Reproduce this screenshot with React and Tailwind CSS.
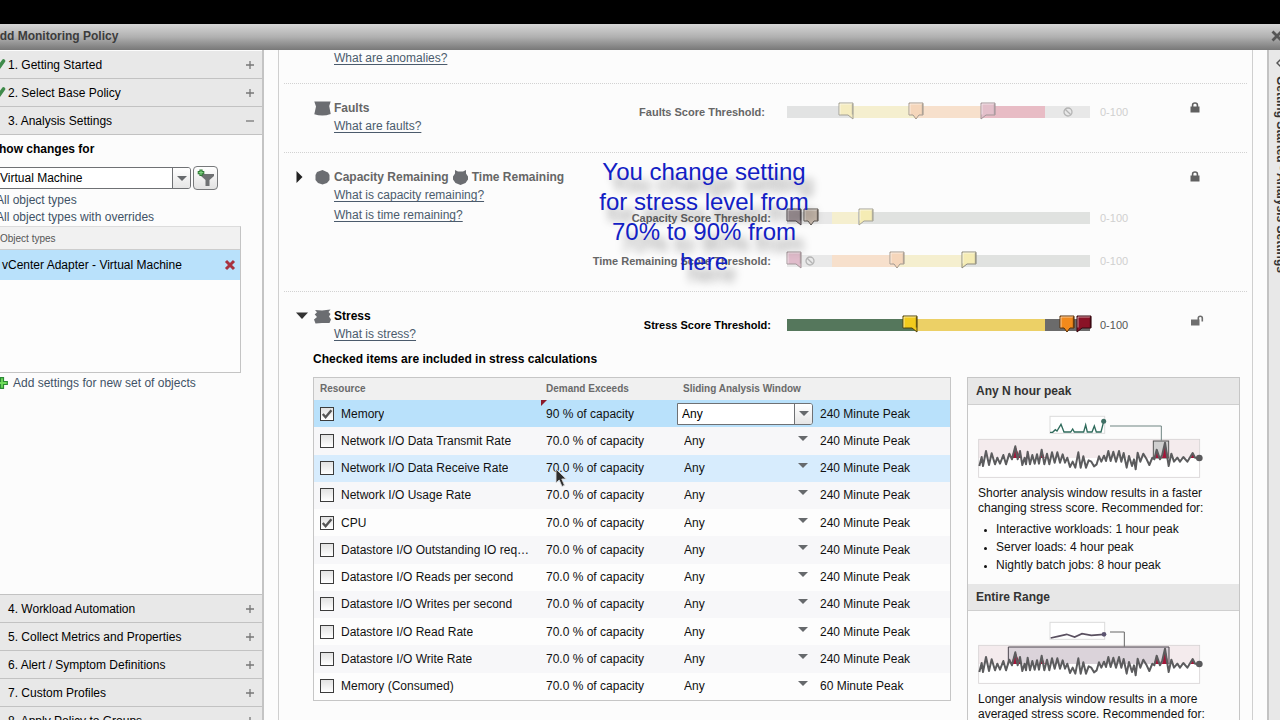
import React from "react";

const WAVE =
  "88,525 95,498 99,525 108,480 117,522 125,487 135,520 142,500 150,518 160,492 168,520 178,488 186,505 196,466 203,505 210,480 217,522 224,500 228,520 233,482 240,520 247,492 254,518 261,490 267,518 275,476 283,520 291,488 298,520 306,484 314,515 322,484 330,515 338,490 345,515 352,500 360,528 368,512 376,530 385,484 392,530 400,496 408,530 416,508 424,512 432,526 440,520 447,496 454,512 462,494 468,510 475,480 482,510 490,482 498,512 507,480 514,512 521,486 530,530 537,495 546,525 552,505 557,535 563,485 571,512 580,488 590,505 598,522 607,500 613,505 620,476 630,505 637,490 645,455 656,525 664,488 672,512 682,500 690,512 700,498 712,512 728,486 735,500 748,500";

const ROWS = [
  { name: "Memory", demand: "90 % of capacity", peak: "240 Minute Peak", checked: true, editing: true },
  { name: "Network I/O Data Transmit Rate", demand: "70.0 % of capacity", peak: "240 Minute Peak" },
  { name: "Network I/O Data Receive Rate", demand: "70.0 % of capacity", peak: "240 Minute Peak", hover: true },
  { name: "Network I/O Usage Rate", demand: "70.0 % of capacity", peak: "240 Minute Peak" },
  { name: "CPU", demand: "70.0 % of capacity", peak: "240 Minute Peak", checked: true },
  { name: "Datastore I/O Outstanding IO requests", demand: "70.0 % of capacity", peak: "240 Minute Peak" },
  { name: "Datastore I/O Reads per second", demand: "70.0 % of capacity", peak: "240 Minute Peak" },
  { name: "Datastore I/O Writes per second", demand: "70.0 % of capacity", peak: "240 Minute Peak" },
  { name: "Datastore I/O Read Rate", demand: "70.0 % of capacity", peak: "240 Minute Peak" },
  { name: "Datastore I/O Write Rate", demand: "70.0 % of capacity", peak: "240 Minute Peak" },
  { name: "Memory (Consumed)", demand: "70.0 % of capacity", peak: "60 Minute Peak" },
];

const FAULTS = {
  segments: [[0, 21.8, "#e2e3e3"], [21.8, 42.5, "#f5efcf"], [42.5, 64, "#f7e0cc"], [64, 85, "#e8bcc5"], [85, 100, "#e8e8e8"]],
  markers: [
    { at: 19.5, point: "right", fill: "#f5ecc0", edge: "#a3a196" },
    { at: 42.6, point: "center", fill: "#f5d6bb", edge: "#a3998f" },
    { at: 66.4, point: "left", fill: "#e3bfca", edge: "#a39699" },
  ],
  ban: 92.6,
};
const CAPACITY = {
  segments: [[0, 15, "#e8e8e8"], [15, 23.5, "#f5efcf"], [23.5, 100, "#e0e2e0"]],
  markers: [
    { at: 2.3, point: "right", fill: "#a3979b", edge: "#4c474a" },
    { at: 8, point: "center", fill: "#cbbdb0", edge: "#5d5650" },
    { at: 26, point: "left", fill: "#f5ecb4", edge: "#a3a196" },
  ],
};
const TIME = {
  segments: [[0, 15, "#e9e9e9"], [15, 36.3, "#f7e0cc"], [36.3, 58, "#f5efcf"], [58, 100, "#e0e2e0"]],
  markers: [
    { at: 2.3, point: "right", fill: "#e0bccb", edge: "#a39699" },
    { at: 36.3, point: "center", fill: "#f5d6bb", edge: "#a3998f" },
    { at: 60, point: "left", fill: "#f5ecb4", edge: "#8c8a7c" },
  ],
  ban: 7.6,
};
const STRESS = {
  segments: [[0, 42.8, "#55775c"], [42.8, 85, "#ecd066"], [85, 100, "#6b6b6b"]],
  markers: [
    { at: 40.5, point: "right", fill: "#f2cb1c", edge: "#4f430b" },
    { at: 92.4, point: "center", fill: "#f28a1c", edge: "#57300a" },
    { at: 98, point: "left", fill: "#8a1226", edge: "#32060e" },
  ],
};

const POINTERS = {
  right: "M1 1H15V17L10 13H1Z",
  center: "M1 1H15V13H11L8 17L5 13H1Z",
  left: "M1 1H15V13H6L1 17Z",
};

function Marker({ at, point, fill, edge, label }) {
  return (
    <button
      type="button"
      role="slider"
      aria-label={label}
      aria-valuemin={0}
      aria-valuemax={100}
      aria-valuenow={Math.round(at)}
      className="absolute -top-1 -ml-2 block h-[18px] w-4"
      style={{ left: `${at}%` }}
    >
      <svg viewBox="0 0 16 18" className="block h-[18px] w-4">
        <path d={POINTERS[point]} fill={fill} stroke={edge} strokeWidth="1" strokeLinejoin="round" />
        <path d="M2 12.5V2H14" fill="none" stroke="#fff" strokeOpacity=".55" strokeWidth="1" />
        <path d="M14.5 2V12.5" fill="none" stroke={edge} strokeOpacity=".7" strokeWidth="1.4" />
      </svg>
    </button>
  );
}

function Threshold({ label, data, active, inset }) {
  return (
    <div className="flex h-5 items-center">
      <span
        className={`w-[200px] shrink-0 whitespace-nowrap text-right text-[11px] font-bold ${active ? "text-black" : "text-[#666]"} ${inset ? "pr-1.5" : ""}`}
      >
        {label}
      </span>
      <div className="relative ml-4 h-3 flex-1">
        <div className="flex h-3">
          {data.segments.map(([from, to, color]) => (
            <div key={from} style={{ width: `${to - from}%`, backgroundColor: color }} />
          ))}
        </div>
        {data.ban && (
          <svg viewBox="0 0 10 10" className="absolute top-px -ml-[5px] size-2.5" style={{ left: `${data.ban}%` }}>
            <circle cx="5" cy="5" r="4" fill="none" stroke="#b4b4b4" strokeWidth="1.3" />
            <path d="M2.2 2.2L7.8 7.8" stroke="#b4b4b4" strokeWidth="1.3" />
          </svg>
        )}
        {data.markers.map((m) => (
          <Marker key={m.at} {...m} label={label} />
        ))}
      </div>
      <span className={`ml-2.5 w-[90px] shrink-0 text-[11px] ${active ? "text-[#555]" : "text-[#d0d0d0]"}`}>0-100</span>
    </div>
  );
}

function Lock({ open }) {
  return open ? (
    <svg viewBox="0 0 14 11" className="h-[11px] w-3.5" fill="none">
      <rect x="1" y="4.5" width="8.5" height="6" fill="#6e6e6e" />
      <path d="M8.3 5V3Q8.300 1.300 10.300 1.300T12.300 3V6.500" stroke="#6e6e6e" strokeWidth="1.6" />
    </svg>
  ) : (
    <svg viewBox="0 0 10 11" className="h-[11px] w-2.5" fill="none">
      <rect x=".5" y="4.5" width="9" height="6" fill="#606060" />
      <path d="M2.6 5V3Q2.6 1 5 1T7.4 3V5" stroke="#606060" strokeWidth="1.6" />
    </svg>
  );
}

function HelpLink({ children }) {
  return (
    <a href="#help" className="text-xs text-[#4b5b6c] underline underline-offset-2">
      {children}
    </a>
  );
}

const ICONS = {
  faults: "M.3 1.500H16.700L15.200 6L16.700 14Q8.500 17 .3 14.200L2 6.500Z",
  capacity: "M8.500 1L14 3.500L15.500 6V11L13 14L8.500 15.500L4 14L1.500 11V6L3 3Z",
  time: "M3 1L6 2.500H11L14 1V4.500L16 7.500V10.500L13.500 14L8.500 16L3.500 14L1 10.500V7.500L3 4.500Z",
  stress: "M1 2L8 2.500L16.500 1.500L14.500 4L16.500 6L15 8.500L17 11.500L15.500 15L8 15L1.500 15.500L0 11.500L3 9L.7 6.500L3 4.300Z",
};

function BadgeIcon({ kind }) {
  return (
    <svg viewBox="0 0 17 17" className="size-[17px] shrink-0">
      <path d={ICONS[kind]} fill="#6b6d71" />
    </svg>
  );
}

function Disclosure({ open, label }) {
  return (
    <button type="button" aria-expanded={!!open} aria-label={label} className="flex h-[18px] w-[18px] shrink-0 items-center">
      {open ? (
        <svg viewBox="0 0 12 8" className="h-2 w-3">
          <path d="M0 .5H12L6 7Z" fill="#333" />
        </svg>
      ) : (
        <svg viewBox="0 0 7 12" className="h-3 w-[7px]">
          <path d="M.5 0L6.5 6L.5 12Z" fill="#222" />
        </svg>
      )}
    </button>
  );
}

function Section({ toggle, title, links, thresholds, lock, locked = true, children }) {
  return (
    <section className="mx-[5px] border-t border-dotted border-[#d2d2d2] pt-[15px]">
      <div className="flex">
        <div className="flex w-[287px] shrink-0 pl-3">
          {toggle ?? <span className="w-[18px] shrink-0" />}
          <div>
            <h2 className="flex h-[18px] items-center gap-[3px] whitespace-nowrap text-xs font-bold">{title}</h2>
            <div className="flex flex-col gap-0.5 pl-5 leading-[18px]">
              {links.map((text) => (
                <div key={text} className="flex h-[18px] items-center">
                  <HelpLink>{text}</HelpLink>
                </div>
              ))}
            </div>
          </div>
        </div>
        <div className="min-w-0 flex-1">{thresholds}</div>
        <div className={`w-[57px] shrink-0 ${lock}`}>
          <button type="button" aria-label={locked ? "Unlock" : "Lock"} className="block">
            <Lock open={!locked} />
          </button>
        </div>
      </div>
      {children}
    </section>
  );
}

function Arrow() {
  return (
    <svg viewBox="0 0 10 5" className="block h-[5px] w-2.5">
      <path d="M0 0H10L5 5Z" fill="#66696c" />
    </svg>
  );
}

function Combo({ label, value, className }) {
  return (
    <div className={`relative h-[22px] ${className}`}>
      <select
        aria-label={label}
        defaultValue={value}
        className="block h-full w-full appearance-none rounded-r-[3px] border border-[#6f7174] bg-white pl-1 pr-5 text-xs text-black"
      >
        <option>{value}</option>
      </select>
      <span className="pointer-events-none absolute inset-y-px right-px flex w-[18px] items-center justify-center rounded-r-[2px] border-l border-[#6f7174] bg-linear-to-b from-white to-[#e6e6e6]">
        <Arrow />
      </span>
    </div>
  );
}

function WindowCell({ row }) {
  if (row.editing) return <Combo label={`${row.name} analysis window`} value="Any" className="w-[136px]" />;
  return (
    <div className="relative w-[136px]">
      <select
        aria-label={`${row.name} analysis window`}
        defaultValue="Any"
        className="block h-[22px] w-full appearance-none bg-transparent pl-[7px] text-xs"
      >
        <option>Any</option>
      </select>
      <span className="pointer-events-none absolute right-[5px] top-1.5">
        <Arrow />
      </span>
    </div>
  );
}

function StressTable() {
  return (
    <div className="min-w-0 flex-1 border border-[#c6c6c6] bg-[#fdfdfd]">
      <table className="h-[322px] w-full table-fixed border-collapse text-left text-xs text-[#111]">
        <colgroup>
          <col />
          <col className="w-[137px]" />
          <col className="w-[137px]" />
          <col className="w-[136px]" />
        </colgroup>
        <thead>
          <tr className="h-[22px] bg-[#f0f0f0] text-[10px] text-[#6a6a6a]">
            <th className="py-0 pl-1.5 font-bold">Resource</th>
            <th className="py-0 pl-1.5 font-bold">Demand Exceeds</th>
            <th className="whitespace-nowrap py-0 pl-1.5 font-bold">Sliding Analysis Window</th>
            <th aria-label="Peak" />
          </tr>
        </thead>
        <tbody>
          {ROWS.map((row, i) => (
            <tr
              key={row.name}
              className={row.editing ? "bg-[#b9e1fb]" : row.hover ? "bg-[#d7ecfd]" : i % 2 ? "bg-[#f7f7f9]" : "bg-[#fdfdfd]"}
            >
              <td className="py-0 pl-1.5 pr-2">
                <label className="flex items-center gap-[7px]">
                  <span className="grid size-3.5 shrink-0">
                    <input
                      type="checkbox"
                      defaultChecked={row.checked}
                      className="peer col-start-1 row-start-1 size-3.5 appearance-none border border-[#3c3c3c] bg-linear-to-b from-[#e2e2e2] to-white"
                    />
                    <svg viewBox="0 0 14 14" className="pointer-events-none col-start-1 row-start-1 hidden size-3.5 peer-checked:block">
                      <path d="M2.8 7L5.6 10.2L11.4 3.2" fill="none" stroke="#555" strokeWidth="2.4" />
                    </svg>
                  </span>
                  <span className="truncate leading-5">{row.name}</span>
                </label>
              </td>
              <td className="relative whitespace-nowrap py-0 pl-1.5">
                {row.editing && (
                  <svg viewBox="0 0 6 6" className="absolute left-px top-0 size-1.5">
                    <path d="M0 0H6L0 6Z" fill="#8b1a2b" />
                  </svg>
                )}
                {row.demand}
              </td>
              <td className="p-0">
                <WindowCell row={row} />
              </td>
              <td className="whitespace-nowrap py-0 pl-1.5">{row.peak}</td>
            </tr>
          ))}
        </tbody>
      </table>
    </div>
  );
}

function Chart({ entire }) {
  return (
    <svg viewBox="84 342 684 240" className="block h-20 w-[228px]" fill="none">
      <rect x="86" y="445" width="663" height="114" fill="#fff" />
      <rect x="86" y="445" width="663" height="56" fill="#f4ebed" />
      {entire ? (
        <rect x="175" y="450" width="482" height="51" fill="#dbd3da" />
      ) : (
        <rect x="610" y="450" width="46" height="51" fill="#cfcfcf" stroke="#555" strokeWidth="3" />
      )}
      {entire && <path d="M175 501V450H657V501" stroke="#4a454d" strokeWidth="3" />}
      <rect x="86" y="445" width="663" height="114" stroke="#d6d2d3" strokeWidth="2.500" />
      <path
        d="M184 501L196 464L206 490L214 501ZM268 501L275 478L284 501ZM612 501L620 474L630 501ZM636 501L645 452L655 501ZM722 501L728 484L736 501Z"
        fill="#a3173a"
      />
      <polyline points={WAVE} stroke="#5c5c5e" strokeWidth="6" strokeLinejoin="round" />
      <circle cx="748" cy="501" r="10" fill="#5a5a5c" />
      <rect x="300" y="376" width="164" height="51" fill="#fff" stroke="#dcdcdc" strokeWidth="3" />
      {entire ? (
        <>
          <path d="M302 423L324 418L350 412L374 420L396 410L424 415L462 412" stroke="#5a5060" strokeWidth="5" />
          <circle cx="462" cy="412" r="7" fill="#5c5470" />
          <path d="M480 405H523V449" stroke="#666" strokeWidth="3" />
        </>
      ) : (
        <>
          <path
            d="M300 424H308L316 416L321 420L333 400L342 423H362L368 414L373 423H401L407 402L412 423H426L433 405L439 423H453L461 392"
            stroke="#2f6b5c"
            strokeWidth="4"
          />
          <circle cx="461" cy="391" r="7.5" fill="#3f6f64" />
          <path d="M480 405H634V449" stroke="#6f8582" strokeWidth="3" />
        </>
      )}
    </svg>
  );
}

function Guide({ title, entire, text, items }) {
  return (
    <section className="h-[206px]">
      <h3 className="flex h-[27px] items-center border-b border-[#cfcfcf] bg-[#e7e7e7] pl-2 text-xs font-bold text-[#333]">{title}</h3>
      <div className="pl-2.5">
        <Chart entire={entire} />
        <p className="mt-px w-[236px] text-xs leading-[15px] text-[#111]">{text}</p>
        <ul className="mt-1 list-disc pl-[18px] text-xs leading-[18px] text-[#111] marker:text-[9px]">
          {items.map((item) => (
            <li key={item}>{item}</li>
          ))}
        </ul>
      </div>
    </section>
  );
}

function StepHeader({ label, done, open }) {
  return (
    <button
      type="button"
      aria-expanded={!!open}
      className="flex h-7 w-full shrink-0 items-center border-b border-[#c2c2c2] bg-[#e8e8e8] pr-2 text-left text-xs text-black"
    >
      <span className="w-[18px] shrink-0">
        {done && (
          <svg viewBox="0 0 16 14" className="h-3.5 w-4">
            <path d="M3 8L7 12L13.5 3" fill="none" stroke="#3f8a4a" strokeWidth="3.6" strokeLinecap="round" />
          </svg>
        )}
      </span>
      <span className="flex-1 whitespace-nowrap">{label}</span>
      <svg viewBox="0 0 8 8" className="size-2">
        <path d={open ? "M0 4H8" : "M0 4H8M4 0V8"} stroke="#777" strokeWidth="1.3" />
      </svg>
    </button>
  );
}

function Sidebar() {
  return (
    <nav className="flex w-[274px] shrink-0 flex-col border-r-2 border-[#c4c4c4] pt-px">
      <StepHeader label="1. Getting Started" done />
      <StepHeader label="2. Select Base Policy" done />
      <StepHeader label="3. Analysis Settings" open />
      <div className="min-h-[460px] shrink-0 border-b border-[#c2c2c2] pt-[5px]">
        <h2 className="pl-px text-xs font-bold leading-[18px] text-black">Show changes for</h2>
        <div className="mt-2 flex items-center gap-0.5 pl-[5px]">
          <Combo label="Show changes for" value="Virtual Machine" className="w-[196px]" />
          <button
            type="button"
            aria-label="Filter object types"
            className="flex h-6 w-[25px] items-center justify-center rounded-[4px] border border-[#77797b] bg-linear-to-b from-white to-[#e2e2e2]"
          >
            <svg viewBox="0 0 18 18" className="size-[18px]">
              <path d="M4 5H17V7L12.5 11V17H8.500V11L4 7Z" fill="#6f7173" />
              <path d="M4 0.500V7M.7 3.700H7.300" stroke="#2f7a35" strokeWidth="3.200" />
              <path d="M4 1.500V6M1.700 3.700H6.300" stroke="#7fd07f" strokeWidth="1.200" />
            </svg>
          </button>
        </div>
        <div className="mt-0.5 flex flex-col items-start pl-1.5 text-xs leading-[17px] text-[#3f5266]">
          <a href="#all">All object types</a>
          <a href="#overrides">All object types with overrides</a>
        </div>
        <div className="ml-[5px] h-[147px] w-[246px] border border-[#c4c4c4] border-t-[#dcdcdc] bg-[#fdfdfd]">
          <div className="flex h-[23px] items-center border-b border-[#cdcdcd] bg-[#f1f1f1] pl-1 text-[10px] text-[#555]">Object types</div>
          <div className="flex h-[30px] items-center justify-between bg-[#b9e1fb] pl-1.5 pr-1 text-xs text-black">
            <span>vCenter Adapter - Virtual Machine</span>
            <button type="button" aria-label="Remove">
              <svg viewBox="0 0 12 12" className="size-3">
                <path d="M2 2L10 10M10 2L2 10" stroke="#a8323f" strokeWidth="3" />
              </svg>
            </button>
          </div>
        </div>
        <a href="#add" className="mt-px flex items-center gap-[5px] pl-1.5 text-xs leading-[18px] text-[#3f5266]">
          <svg viewBox="0 0 12 12" className="size-3">
            <path d="M4.500 .7H7.500V4.500H11.300V7.500H7.500V11.300H4.500V7.500H.7V4.500H4.500Z" fill="#6fdc5a" stroke="#2b8a35" strokeWidth="1.200" />
          </svg>
          Add settings for new set of objects
        </a>
      </div>
      <StepHeader label="4. Workload Automation" />
      <StepHeader label="5. Collect Metrics and Properties" />
      <StepHeader label="6. Alert / Symptom Definitions" />
      <StepHeader label="7. Custom Profiles" />
      <StepHeader label="8. Apply Policy to Groups" />
    </nav>
  );
}

export default function App() {
  return (
    <div className="relative flex h-screen flex-col overflow-hidden bg-[#fcfcfc] font-['Liberation_Sans',Arial,sans-serif]">
      <div className="h-6 shrink-0 bg-black" />
      <div className="-ml-2.5 -mr-3 flex min-h-0 flex-1 flex-col">
        <header className="flex h-[26px] shrink-0 items-center justify-between bg-linear-to-b from-[#d6d6d6] via-[#b0b0b0] to-[#787878] pb-0.5 pl-px pr-[9px]">
          <h1 className="text-xs font-bold text-[#3c3c3c]">Add Monitoring Policy</h1>
          <button type="button" aria-label="Close">
            <svg viewBox="0 0 12 12" className="size-3">
              <path d="M1.500 1.500L10.500 10.500M10.500 1.500L1.500 10.500" stroke="#555" strokeWidth="2.800" />
            </svg>
          </button>
        </header>
        <div className="flex min-h-0 flex-1">
          <Sidebar />
          <main className="mx-3.5 min-w-0 flex-1 overflow-hidden border-x border-[#cfcfcf]">
            <div className="flex h-[33px] items-start pl-[55px] leading-4">
              <HelpLink>What are anomalies?</HelpLink>
            </div>
            <Section
              title={
                <>
                  <BadgeIcon kind="faults" />
                  <span className="text-[#666]">Faults</span>
                </>
              }
              links={["What are faults?"]}
              lock="pt-[3px]"
              thresholds={
                <div className="pb-4 pt-[3px]">
                  <Threshold label="Faults Score Threshold:" data={FAULTS} inset />
                </div>
              }
            />
            <div className="h-3.5" />
            <Section
              toggle={<Disclosure label="Expand capacity settings" />}
              title={
                <>
                  <BadgeIcon kind="capacity" />
                  <span className="text-[#666]">Capacity Remaining</span>
                  <BadgeIcon kind="time" />
                  <span className="text-[#666]">Time Remaining</span>
                </>
              }
              links={["What is capacity remaining?", "What is time remaining?"]}
              lock="pt-[3px]"
              thresholds={
                <div className="flex flex-col gap-[23px] pb-5 pt-10">
                  <Threshold label="Capacity Score Threshold:" data={CAPACITY} />
                  <Threshold label="Time Remaining Score Threshold:" data={TIME} />
                </div>
              }
            />
            <Section
              toggle={<Disclosure open label="Collapse stress settings" />}
              title={
                <>
                  <BadgeIcon kind="stress" />
                  <span className="text-black">Stress</span>
                </>
              }
              links={["What is stress?"]}
              lock="pt-2"
              locked={false}
              thresholds={
                <div className="pt-2">
                  <Threshold label="Stress Score Threshold:" data={STRESS} active />
                </div>
              }
            >
              <div className="pl-[29px] pr-[7px]">
                <p className="mt-[7px] text-xs font-bold leading-[18px] text-black">Checked items are included in stress calculations</p>
                <div className="mt-[9px] flex items-start gap-4">
                  <StressTable />
                  <aside className="w-[273px] shrink-0 border border-[#c6c6c6]">
                    <Guide
                      title="Any N hour peak"
                      text="Shorter analysis window results in a faster changing stress score. Recommended for:"
                      items={["Interactive workloads: 1 hour peak", "Server loads: 4 hour peak", "Nightly batch jobs: 8 hour peak"]}
                    />
                    <Guide
                      title="Entire Range"
                      entire
                      text="Longer analysis window results in a more averaged stress score. Recommended for:"
                      items={[]}
                    />
                  </aside>
                </div>
              </div>
            </Section>
          </main>
          <aside className="flex w-[25px] shrink-0 flex-col items-center border-l-2 border-[#c2c2c2] bg-[#e8e8e8] pt-2">
            <button type="button" aria-label="Show help">
              <svg viewBox="0 0 10 10" className="size-2.5">
                <path d="M5 1L1 5L5 9M9 1L5 5L9 9" fill="none" stroke="#555" strokeWidth="1.500" />
              </svg>
            </button>
            <span className="mt-2 whitespace-nowrap text-xs font-bold text-[#333] [writing-mode:vertical-rl]">
              Getting Started - Analysis Settings
            </span>
          </aside>
        </div>
      </div>
      <p className="pointer-events-none absolute left-[592px] top-[157px] w-[224px] text-center text-2xl leading-[30px] text-[#1220c4] [text-shadow:8px_12px_8px_rgba(0,0,0,0.4)]">
        You change setting for stress level from 70% to 90% from here
      </p>
      <svg viewBox="0 0 12 20" className="pointer-events-none absolute left-[555px] top-[468px] h-5 w-3">
        <path d="M1 1V15L4.200 12L7 18.500L9.500 17.300L6.800 11H11.200Z" fill="#2d2d2d" stroke="#ddd" strokeWidth=".9" />
      </svg>
    </div>
  );
}
